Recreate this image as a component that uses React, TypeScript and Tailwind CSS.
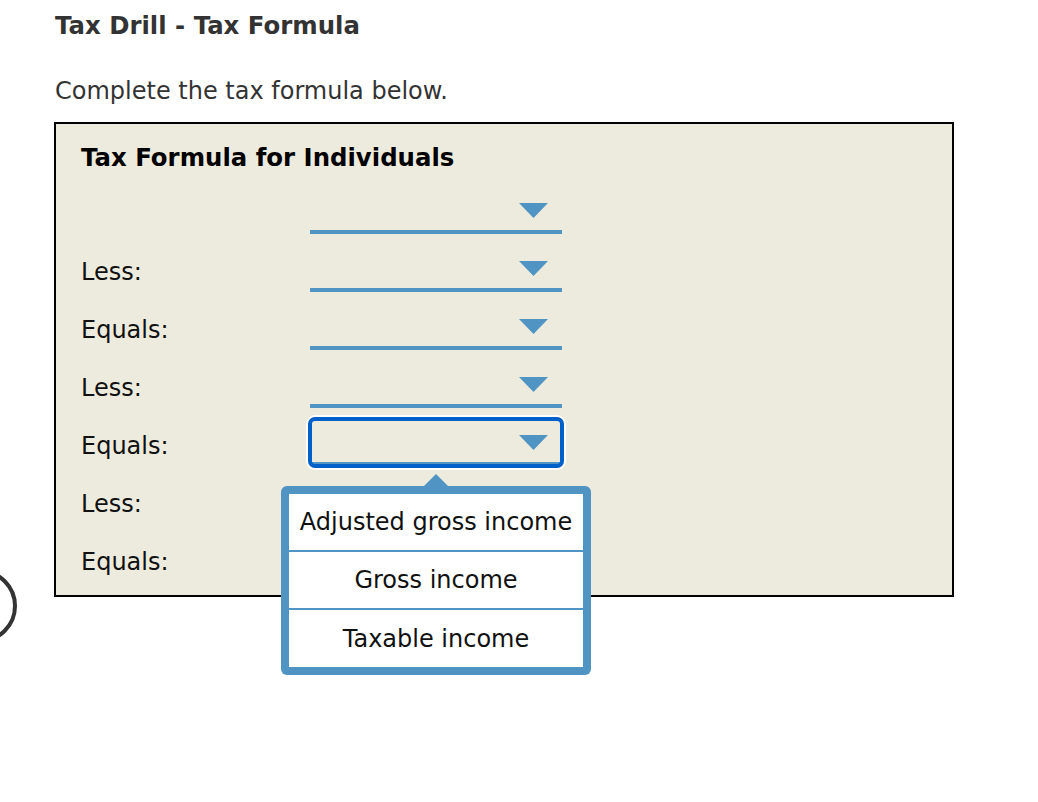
import React from "react";

const rows = ["", "Less:", "Equals:", "Less:", "Equals:", "Less:", "Equals:"];

function Arrow() {
  return (
    <svg width="29" height="15" viewBox="0 0 29 15" className="absolute right-[14px] top-[15px]">
      <polygon points="0,0 29,0 14.5,15" fill="#5094c4" />
    </svg>
  );
}

function Select({ focused }: { focused?: boolean }) {
  return (
    <div className="relative w-[252px] h-[46px] border-b-[4px] border-[#5094c4]">
      <Arrow />
      {focused && (
        <div className="absolute left-[-2px] right-[-2px] top-[-3px] bottom-[-6px] rounded-[7px] border-[4px] border-[#0060c9] shadow-[0_0_0_2px_#ffffff]" />
      )}
      {focused && (
        <div className="absolute z-20 left-1/2 -translate-x-1/2 top-[54px] w-[310px]">
          <div className="flex justify-center">
            <svg width="24" height="12" viewBox="0 0 24 12" className="block">
              <polygon points="0,12 24,12 12,0" fill="#5094c4" />
            </svg>
          </div>
          <div className="rounded-[6px] bg-[#5094c4] p-[8px]">
            <div className="flex flex-col gap-[2px] bg-[#5094c4]">
              {["Adjusted gross income", "Gross income", "Taxable income"].map((t, i) => (
                <div
                  key={t}
                  className={`bg-white flex items-center justify-center text-[24px] text-[#111] ${i === 2 ? "h-[57px]" : "h-[56px]"}`}
                >
                  {t}
                </div>
              ))}
            </div>
          </div>
        </div>
      )}
    </div>
  );
}

export default function App() {
  return (
    <div
      className="relative min-h-[802px] bg-white overflow-hidden"
      style={{ fontFamily: "'DejaVu Sans', Verdana, sans-serif" }}
    >
      <div className="absolute left-[-57px] top-[569px] w-[74px] h-[74px] rounded-full border-[4px] border-[#333333]" />
      <div className="pl-[54px] pt-[11px]">
        <h1 className="text-[24.4px] leading-[30px] font-bold text-[#333333] pl-[1px]">Tax Drill - Tax Formula</h1>
        <p className="mt-[35px] text-[24px] leading-[30px] text-[#333333] pl-[1px]">Complete the tax formula below.</p>
        <div className="mt-[16px] w-[900px] border-[2px] border-black bg-[#edebdd] pl-[25px] pt-[19px] pb-[13px]">
          <h2 className="text-[24.4px] leading-[30px] font-bold text-black">Tax Formula for Individuals</h2>
          <div className="mt-[3px] flex flex-col">
            {rows.map((label, i) => (
              <div key={i} className="flex items-end h-[58px]">
                <div className="w-[229px] text-[24px] leading-[40px] text-[#111]">{label}</div>
                <Select focused={i === 4} />
              </div>
            ))}
          </div>
        </div>
      </div>
    </div>
  );
}
